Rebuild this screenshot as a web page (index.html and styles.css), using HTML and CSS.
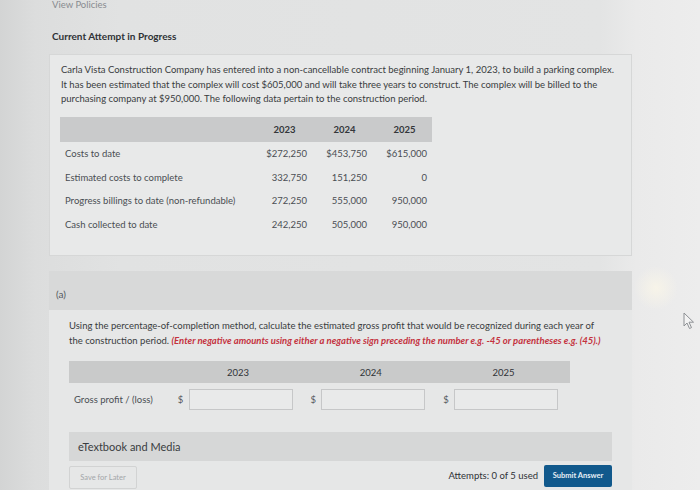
FILE: index.html
```html
<!DOCTYPE html>
<html lang="en">
<head>
  <meta charset="UTF-8" />
  <title>Current Attempt in Progress</title>
  <link rel="stylesheet" href="styles.css">
</head>
<body>
  <div class="page">
    <div class="policies">View Policies</div>
    <h2 class="attempt">Current Attempt in Progress</h2>

    <!-- enunciado del problema -->
    <div class="question">
      <p>Carla Vista Construction Company has entered into a non-cancellable contract beginning January 1, 2023, to build a parking complex.<br>
      It has been estimated that the complex will cost $605,000 and will take three years to construct. The complex will be billed to the<br>
      purchasing company at $950,000. The following data pertain to the construction period.</p>

      <table class="datos">
        <thead>
          <tr><th class="etiqueta"></th><th>2023</th><th>2024</th><th>2025</th></tr>
        </thead>
        <tbody>
          <tr><td class="etiqueta">Costs to date</td><td>$272,250</td><td>$453,750</td><td>$615,000</td></tr>
          <tr><td class="etiqueta">Estimated costs to complete</td><td>332,750</td><td>151,250</td><td>0</td></tr>
          <tr><td class="etiqueta">Progress billings to date (non-refundable)</td><td>272,250</td><td>555,000</td><td>950,000</td></tr>
          <tr><td class="etiqueta">Cash collected to date</td><td>242,250</td><td>505,000</td><td>950,000</td></tr>
        </tbody>
      </table>
    </div>

    <!-- parte (a) -->
    <div class="parte">
      <div class="parte-titulo">(a)</div>
      <div class="parte-cuerpo">
        <p>Using the percentage-of-completion method, calculate the estimated gross profit that would be recognized during each year of<br>
        the construction period. <em class="ayuda">(Enter negative amounts using either a negative sign preceding the number e.g. -45 or parentheses e.g. (45).)</em></p>

        <table class="respuesta">
          <thead>
            <tr><th class="etiqueta"></th><th>2023</th><th>2024</th><th>2025</th></tr>
          </thead>
          <tbody>
            <tr>
              <td class="etiqueta">Gross profit / (loss)</td>
              <td><span class="moneda">$</span><input type="text" class="campo"></td>
              <td><span class="moneda">$</span><input type="text" class="campo"></td>
              <td><span class="moneda">$</span><input type="text" class="campo"></td>
            </tr>
          </tbody>
        </table>

        <div class="media">eTextbook and Media</div>

        <div class="acciones">
          <button class="guardar">Save for Later</button>
          <span class="intentos">Attempts: 0 of 5 used</span>
          <button class="enviar">Submit Answer</button>
        </div>
      </div>
    </div>
  </div>

  <svg class="cursor" width="12" height="18" viewBox="0 0 12 18">
    <path d="M1 1 L1 14 L4 11 L6.5 16.5 L8.5 15.6 L6 10.2 L10.5 10.2 Z" fill="#f3f3f3" stroke="#8d9094" stroke-width="1"/>
  </svg>
</body>
</html>
```

FILE: styles.css
```css
body {
  margin: 0;
  height: 490px;
  overflow: hidden;
  font-family: Lato, "Open Sans", sans-serif;
  font-size: 9.5px;
  color: #393c40;
  background:
    radial-gradient(circle at 656px 288px, rgba(250, 246, 232, 0.8) 0, rgba(250, 246, 232, 0) 22px),
    linear-gradient(to right, #d3d4d4 0, #dcdddd 35px, #e1e2e2 120px, #e3e4e4 600px, #eaeaea 636px, #ededed 100%);
}

.page {
  width: 583px;
  margin-left: 49px;
}

.policies {
  line-height: 9px;
  padding-left: 3px;
  color: #888b8f;
}

.attempt {
  margin: 20px 0 0;
  padding-left: 3px;
  font-size: 10px;
  line-height: 14px;
  color: #2f3236;
}

.question {
  margin-top: 11px;
  padding: 8px 12px 19px 11px;
  background: #e8e9e9;
  border: 1px solid #d6d7d7;
}

.question p,
.parte-cuerpo p {
  margin: 0;
  line-height: 14.5px;
}

.datos {
  margin: 10.5px 0 0 -1px;
  border-collapse: collapse;
  width: 372px;
}

.datos th {
  height: 25px;
  padding: 0 5px 0 10px;
  background: #c9cacb;
  font-weight: bold;
  color: #33363a;
  text-align: center;
}

.datos td {
  height: 23.5px;
  padding: 0 5px 0 10px;
  text-align: right;
  color: #4a4e53;
  width: 45px;
}

.datos .etiqueta {
  width: auto;
  padding-left: 5px;
  text-align: left;
}

.parte {
  margin-top: 15px;
}

.parte-titulo {
  padding: 16px 7px 8px;
  line-height: 15px;
  background: #d8d9d9;
  color: #55595e;
  font-size: 10px;
}

.parte-cuerpo {
  padding: 9px 20px 0;
  background: #e6e7e7;
  height: 171px;
}

.ayuda {
  color: #c4323e;
  font-weight: bold;
}

.respuesta {
  margin-top: 13px;
  border-collapse: collapse;
  width: 501px;
}

.respuesta th {
  height: 22px;
  padding: 0;
  background: #c9caca;
  font-weight: normal;
  color: #303337;
  width: 133px;
}

.respuesta th.etiqueta {
  width: 103px;
}

.respuesta td {
  padding: 6px 0 3px 6px;
  white-space: nowrap;
}

.respuesta td.etiqueta {
  padding-left: 5px;
  color: #4a4e53;
}

.moneda {
  display: inline-block;
  width: 11px;
  color: #55595e;
  vertical-align: middle;
}

.campo {
  width: 104px;
  height: 21px;
  box-sizing: border-box;
  border: 1px solid #c6c7c8;
  background: #e9eaea;
  vertical-align: middle;
}

.media {
  margin-top: 19px;
  height: 29px;
  line-height: 29px;
  padding-left: 9px;
  background: #d6d7d7;
  font-size: 11px;
  color: #3a3d41;
}

.acciones {
  display: flex;
  align-items: center;
  margin-top: 1px;
}

.guardar {
  align-self: flex-start;
  margin-top: 4px;
  width: 68px;
  height: 23px;
  border: 1px solid #d2d3d3;
  border-radius: 2px;
  background: #e6e7e7;
  color: #a3a6a9;
  font-family: Lato, sans-serif;
  font-size: 7.5px;
  padding: 0;
}

.intentos {
  margin-left: auto;
  margin-right: 6px;
  color: #2f3236;
}

.enviar {
  width: 68px;
  height: 22px;
  border: none;
  border-radius: 2px;
  background: #11598c;
  color: #e6eef5;
  font-family: Lato, sans-serif;
  font-weight: bold;
  font-size: 7.5px;
  padding: 0;
}

.cursor {
  position: absolute;
  left: 683px;
  top: 312px;
}
```
